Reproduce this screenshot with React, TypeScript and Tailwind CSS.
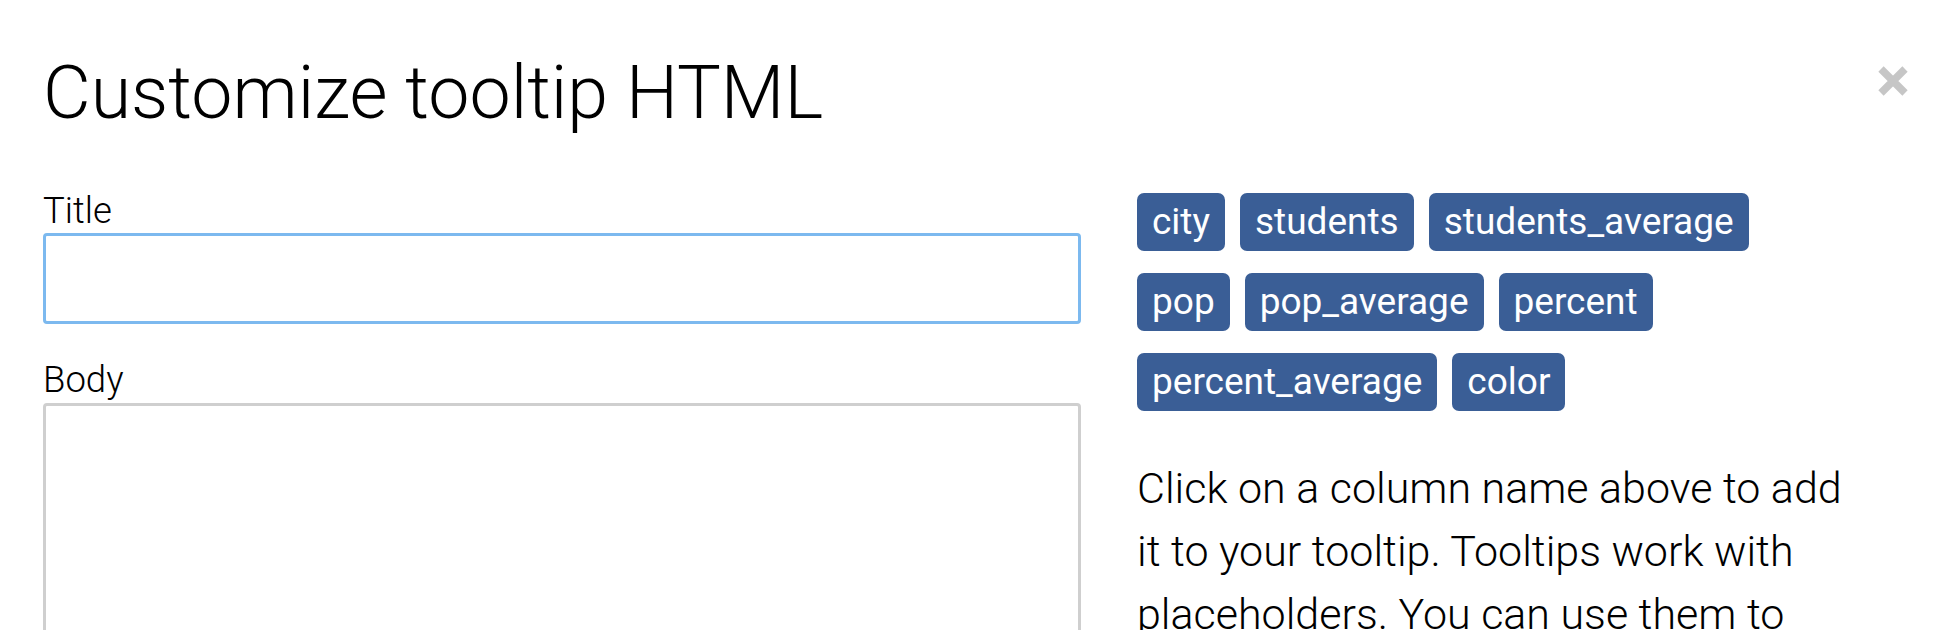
import React from "react";

const tags: string[][] = [
  ["city", "students", "students_average"],
  ["pop", "pop_average", "percent"],
  ["percent_average", "color"],
];

export default function App() {
  return (
    <div className="w-[1950px] h-[630px] overflow-hidden bg-white px-[43px] text-black font-['Roboto',sans-serif]">
      <div className="flex items-start justify-between">
        <h1 className="pt-[57px] text-[73.5px] leading-[73px] font-light tracking-normal">
          Customize tooltip HTML
        </h1>
        <button className="mt-[64px] mr-[-3px] w-[34px] h-[34px] flex items-center justify-center">
          <svg width="32" height="32" viewBox="0 0 32 32">
            <path d="M4 4 L28 28 M28 4 L4 28" stroke="#c6c6c6" strokeWidth="7.5" strokeLinecap="butt" />
          </svg>
        </button>
      </div>
      <div className="flex gap-[56px]">
        <div className="w-[1038px] shrink-0">
          <label className="block mt-[61px] text-[36.5px] leading-[40px] font-light">Title</label>
          <div className="mt-[2px] h-[91px] border-[3px] border-[#7cb9ef] rounded-[4px]"></div>
          <label className="block mt-[36px] text-[36.5px] leading-[40px] font-light">Body</label>
          <div className="mt-[3px] h-[400px] border-[3px] border-[#cfcfcf] rounded-[4px]"></div>
        </div>
        <div className="w-[718px] shrink-0 pt-[63px]">
          <div className="flex flex-col gap-[22px]">
            {tags.map((row, i) => (
              <div key={i} className="flex gap-[15px]">
                {row.map((t) => (
                  <span
                    key={t}
                    className="h-[58px] px-[15px] rounded-[7px] bg-[#3a5e96] text-white text-[37px] leading-[58px] font-normal"
                  >
                    {t}
                  </span>
                ))}
              </div>
            ))}
          </div>
          <p className="mt-[46px] text-[43px] leading-[63px] font-light">
            Click on a column name above to add it to your tooltip. Tooltips work with placeholders. You can use them to
          </p>
        </div>
      </div>
    </div>
  );
}
